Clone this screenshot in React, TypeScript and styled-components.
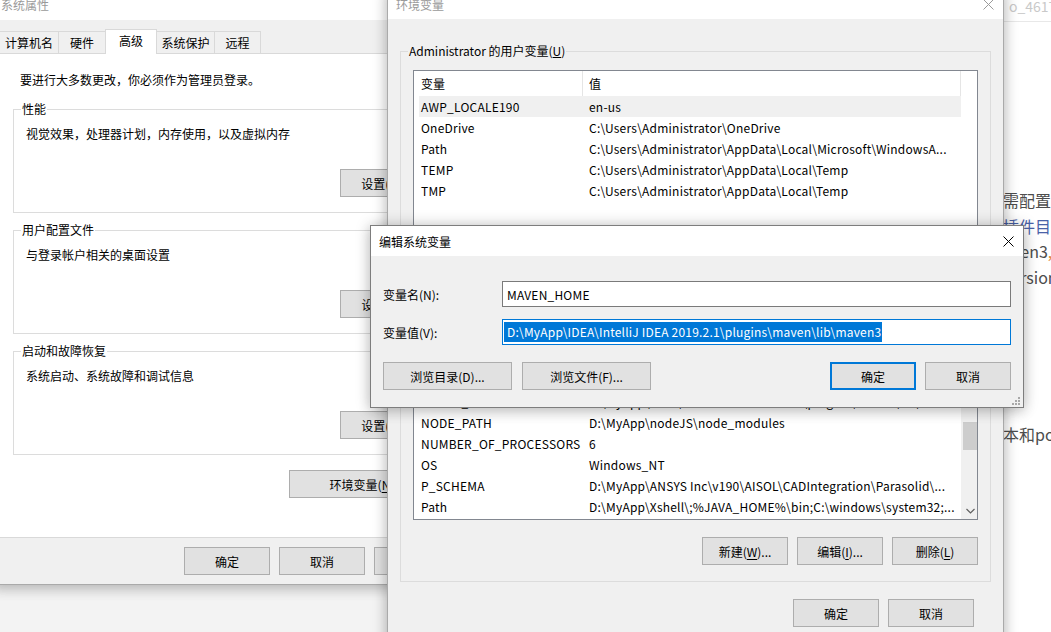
import React from "react";
import styled, { createGlobalStyle } from "styled-components";

const GlobalStyle = createGlobalStyle`
  html, body {
    margin: 0;
    padding: 0;
  }
  body {
    font-family: "Noto Sans CJK SC", "Noto Sans", sans-serif;
    font-size: 12px;
    color: #000;
  }
`;

const Desktop = styled.div`
  position: relative;
  width: 1051px;
  height: 632px;
  overflow: hidden;
  background: #f3f3f3;
`;

/* browser page that sits behind the dialogs */
const Page = styled.div`
  position: absolute;
  left: 990px;
  top: 0;
  right: 0;
  bottom: 0;
  background: #fff;
  display: flex;
  flex-direction: column;
`;

const PageStrip = styled.div`
  height: 21px;
  border-bottom: 1px solid #e8e8e8;
  padding-left: 19px;
  color: #c9c9c9;
  font-size: 14px;
  line-height: 12px;
  white-space: nowrap;
  overflow: hidden;
`;

const Article = styled.div`
  padding: 166px 0 0 13px;
  font-size: 16px;
  line-height: 25.5px;
  color: #4d4d4d;
  white-space: nowrap;
`;

const Para = styled.p`
  margin: 0 0 132px;
`;

const Link = styled.span`
  color: #4a62a8;
`;

const Mark = styled.span`
  color: #e3883c;
`;

const Win = styled.div<{ $x: number; $y: number; $w: number; $h: number; $active?: boolean }>`
  position: absolute;
  left: ${(p) => p.$x}px;
  top: ${(p) => p.$y}px;
  width: ${(p) => p.$w}px;
  height: ${(p) => p.$h}px;
  box-sizing: border-box;
  display: flex;
  flex-direction: column;
  background: #f0f0f0;
  border: 1px solid ${(p) => (p.$active ? "#7d7d7d" : "#aaaaaa")};
  box-shadow: 0 0 14px rgba(0, 0, 0, 0.22), 0 5px 12px rgba(0, 0, 0, 0.12);
`;

const TitleBar = styled.div<{ $h: number; $active?: boolean }>`
  flex: none;
  height: ${(p) => p.$h}px;
  display: flex;
  align-items: center;
  justify-content: space-between;
  padding-left: 8px;
  background: #fff;
  color: ${(p) => (p.$active ? "#000" : "#9a9a9a")};
  white-space: nowrap;
`;

const CloseBox = styled.div`
  width: 30px;
  height: 100%;
  display: flex;
  align-items: center;
  justify-content: center;
`;

const Close = ({ active }: { active?: boolean }) => (
  <CloseBox>
    <svg width="11" height="11" viewBox="0 0 11 11">
      <path d="M0.5 0.5L10.5 10.5M10.5 0.5L0.5 10.5" stroke={active ? "#000" : "#9a9a9a"} strokeWidth="1" />
    </svg>
  </CloseBox>
);

const TabStrip = styled.div`
  flex: none;
  height: 33px;
  display: flex;
  align-items: flex-end;
  padding-left: 7px;
`;

const Tab = styled.div<{ $w: number; $selected?: boolean }>`
  box-sizing: border-box;
  width: ${(p) => p.$w}px;
  height: ${(p) => (p.$selected ? 25 : 22)}px;
  margin: 0 0 ${(p) => (p.$selected ? -1 : 0)}px -1px;
  padding-bottom: ${(p) => (p.$selected ? 3 : 0)}px;
  display: flex;
  align-items: center;
  justify-content: center;
  border: 1px solid #d9d9d9;
  border-bottom: none;
  background: ${(p) => (p.$selected ? "#fff" : "#f0f0f0")};
  position: relative;
  z-index: ${(p) => (p.$selected ? 2 : 1)};
`;

const TabPanel = styled.div`
  flex: none;
  height: 485px;
  box-sizing: border-box;
  margin: 0 6px;
  padding: 18px 13px 0;
  background: #fff;
  border: 1px solid #d9d9d9;
  display: flex;
  flex-direction: column;
`;

const Note = styled.div`
  padding-left: 7px;
  line-height: 16px;
`;

const Group = styled.fieldset`
  margin: 9px 0 0;
  padding: 0 12px 15px;
  min-width: 0;
  border: 1px solid #dcdcdc;
  display: flex;
  flex-direction: column;
  ${Note} + & {
    margin-top: 13px;
  }
`;

const EnvGroup = styled(Group)`
  padding-bottom: 16px;
  margin-top: 9px;
  &:first-child {
    margin-top: 0;
  }
`;

const Legend = styled.legend`
  margin-left: -5px;
  padding: 0 1px;
  line-height: 16px;
`;

const GroupText = styled.div`
  margin-top: 9px;
  line-height: 16px;
`;

const Actions = styled.div<{ $gap?: number; $top: number }>`
  display: flex;
  justify-content: flex-end;
  gap: ${(p) => p.$gap ?? 0}px;
  margin-top: ${(p) => p.$top}px;
`;

const Button = styled.div<{ $w?: number; $default?: boolean }>`
  box-sizing: border-box;
  width: ${(p) => p.$w ?? 86}px;
  height: 28px;
  flex: none;
  display: flex;
  align-items: center;
  justify-content: center;
  background: #e1e1e1;
  border: ${(p) => (p.$default ? "2px solid #0078d7" : "1px solid #adadad")};
  white-space: nowrap;
  u {
    text-underline-offset: 2px;
  }
`;

const Footer = styled.div`
  flex: 1;
  display: flex;
  justify-content: flex-end;
  align-items: flex-start;
  gap: 9px;
  padding: 9px 5px 0 0;
`;

const EnvBody = styled.div`
  flex: 1;
  display: flex;
  flex-direction: column;
  padding: 24px 12px 0;
`;

const EnvFooter = styled(Actions)`
  padding-right: 17px;
`;

const ListBox = styled.div`
  box-sizing: border-box;
  height: 176px;
  margin-top: 11px;
  border: 1px solid #828790;
  background: #fff;
  display: flex;
  overflow: hidden;
`;

const ListBody = styled.div`
  width: 547px;
  flex: none;
  display: flex;
  flex-direction: column;
`;

const HeaderRow = styled.div`
  flex: none;
  height: 25px;
  display: flex;
`;

const HeaderCell = styled.div<{ $w: number }>`
  box-sizing: border-box;
  width: ${(p) => p.$w}px;
  padding-left: 6px;
  display: flex;
  align-items: center;
  border-right: 1px solid #e5e5e5;
  &:first-child {
    padding-left: 7px;
  }
`;

const Row = styled.div<{ $selected?: boolean }>`
  flex: none;
  height: 21px;
  margin-left: 5px;
  display: flex;
  align-items: center;
  background: ${(p) => (p.$selected ? "#f0f0f0" : "transparent")};
  white-space: nowrap;
  letter-spacing: 0.22px;
`;

const NameCell = styled.div`
  width: 164px;
  padding-left: 2px;
  box-sizing: border-box;
  overflow: hidden;
`;

const ValueCell = styled.div`
  width: 378px;
  padding-left: 6px;
  box-sizing: border-box;
  overflow: hidden;
`;

const Scrollbar = styled.div`
  width: 18px;
  flex: none;
  display: flex;
  flex-direction: column;
  background: #f0f0f0;
`;

const ScrollArrow = styled.div`
  height: 17px;
  flex: none;
  display: flex;
  align-items: center;
  justify-content: center;
`;

const ScrollTrack = styled.div`
  flex: 1;
  display: flex;
  flex-direction: column;
  align-items: center;
`;

const Thumb = styled.div`
  width: 15px;
  height: 28px;
  background: #cdcdcd;
`;

const Chevron = ({ up }: { up?: boolean }) => (
  <svg width="9" height="6" viewBox="0 0 9 6">
    <path d={up ? "M0.5 5L4.5 1L8.5 5" : "M0.5 1L4.5 5L8.5 1"} stroke="#606060" strokeWidth="1.2" fill="none" />
  </svg>
);

const DialogBody = styled.div`
  flex: 1;
  display: flex;
  flex-direction: column;
  padding: 25px 12px 0;
`;

const FieldGrid = styled.div`
  display: grid;
  grid-template-columns: 119px 1fr;
  row-gap: 12px;
  align-items: center;
`;

const TextField = styled.div<{ $focused?: boolean }>`
  box-sizing: border-box;
  height: 26px;
  display: flex;
  align-items: center;
  padding-left: ${(p) => (p.$focused ? 1 : 4)}px;
  background: #fff;
  border: 1px solid ${(p) => (p.$focused ? "#0078d7" : "#7a7a7a")};
  white-space: nowrap;
  overflow: hidden;
  letter-spacing: 0.2px;
`;

const Selection = styled.span`
  background: #0078d7;
  color: #fff;
  line-height: 20px;
  padding: 0 1px 0 3px;
`;

const DialogButtons = styled.div`
  display: flex;
  gap: 10px;
  margin-top: 17px;
`;

const RightButtons = styled.div`
  display: flex;
  gap: 9px;
  margin-left: auto;
`;

const Grip = styled.svg`
  position: absolute;
  right: 3px;
  bottom: 2px;
`;

const tabs: [string, number][] = [
  ["计算机名", 60],
  ["硬件", 48],
  ["高级", 52],
  ["系统保护", 59],
  ["远程", 47],
];

const userVars = [
  ["AWP_LOCALE190", "en-us"],
  ["OneDrive", "C:\\Users\\Administrator\\OneDrive"],
  ["Path", "C:\\Users\\Administrator\\AppData\\Local\\Microsoft\\WindowsA..."],
  ["TEMP", "C:\\Users\\Administrator\\AppData\\Local\\Temp"],
  ["TMP", "C:\\Users\\Administrator\\AppData\\Local\\Temp"],
];

const systemVars = [
  ["JAVA_HOME", "D:\\MyApp\\Java\\jdk1.8.0_201"],
  ["MAVEN_HOME", "D:\\MyApp\\IDEA\\IntelliJ IDEA 2019.2.1\\plugins\\maven\\lib\\maven3"],
  ["NODE_PATH", "D:\\MyApp\\nodeJS\\node_modules"],
  ["NUMBER_OF_PROCESSORS", "6"],
  ["OS", "Windows_NT"],
  ["P_SCHEMA", "D:\\MyApp\\ANSYS Inc\\v190\\AISOL\\CADIntegration\\Parasolid\\..."],
  ["Path", "D:\\MyApp\\Xshell\\;%JAVA_HOME%\\bin;C:\\windows\\system32;..."],
];

const groups = [
  { title: "性能", text: "视觉效果，处理器计划，内存使用，以及虚拟内存", key: "S" },
  { title: "用户配置文件", text: "与登录帐户相关的桌面设置", key: "E" },
  { title: "启动和故障恢复", text: "系统启动、系统故障和调试信息", key: "T" },
];

const VarList = ({ rows, selected, scroll }: { rows: string[][]; selected?: number; scroll?: boolean }) => (
  <ListBox>
    <ListBody>
      <HeaderRow>
        <HeaderCell $w={169}>变量</HeaderCell>
        <HeaderCell $w={378}>值</HeaderCell>
      </HeaderRow>
      {rows.map(([name, value], i) => (
        <Row key={name + i} $selected={i === selected}>
          <NameCell>{name}</NameCell>
          <ValueCell>{value}</ValueCell>
        </Row>
      ))}
    </ListBody>
    {scroll && (
      <Scrollbar>
        <ScrollArrow>
          <Chevron up />
        </ScrollArrow>
        <ScrollTrack>
          <Thumb style={{ marginTop: 60 }} />
        </ScrollTrack>
        <ScrollArrow>
          <Chevron />
        </ScrollArrow>
      </Scrollbar>
    )}
  </ListBox>
);

const VarButtons = () => (
  <Actions $top={17} $gap={9}>
    <Button>
      新建(<u>W</u>)...
    </Button>
    <Button>
      编辑(<u>I</u>)...
    </Button>
    <Button>
      删除(<u>L</u>)
    </Button>
  </Actions>
);

export default function App() {
  return (
    <>
      <GlobalStyle />
      <Desktop>
        <Page>
          <PageStrip>o_4617259</PageStrip>
          <Article>
            <Para>
              需配置
              <br />
              <Link>插件目</Link>录
              <br />
              aven3<Mark>,</Mark>
              <br />
              version
            </Para>
            <Para>本和pom</Para>
          </Article>
        </Page>

        <Win $x={-8} $y={-12} $w={474} $h={597}>
          <TitleBar $h={31}>系统属性</TitleBar>
          <TabStrip>
            {tabs.map(([t, w]) => (
              <Tab key={t} $w={w} $selected={t === "高级"}>
                {t}
              </Tab>
            ))}
          </TabStrip>
          <TabPanel>
            <Note>要进行大多数更改，你必须作为管理员登录。</Note>
            {groups.map((g) => (
              <Group key={g.title}>
                <Legend>{g.title}</Legend>
                <GroupText>{g.text}</GroupText>
                <Actions $top={27}>
                  <Button $w={92}>
                    设置(<u>{g.key}</u>)...
                  </Button>
                </Actions>
              </Group>
            ))}
            <Actions $top={15}>
              <Button $w={156}>
                环境变量(<u>N</u>)...
              </Button>
            </Actions>
          </TabPanel>
          <Footer>
            <Button>确定</Button>
            <Button>取消</Button>
            <Button>
              应用(<u>A</u>)
            </Button>
          </Footer>
        </Win>

        <Win $x={387} $y={-12} $w={617} $h={660}>
          <TitleBar $h={30}>
            环境变量
            <Close />
          </TitleBar>
          <EnvBody>
            <EnvGroup>
              <Legend>
                Administrator 的用户变量(<u>U</u>)
              </Legend>
              <VarList rows={userVars} selected={0} />
              <VarButtons />
            </EnvGroup>
            <EnvGroup>
              <Legend>
                系统变量(<u>S</u>)
              </Legend>
              <VarList rows={systemVars} scroll />
              <VarButtons />
            </EnvGroup>
            <EnvFooter $top={17} $gap={9}>
              <Button>确定</Button>
              <Button>取消</Button>
            </EnvFooter>
          </EnvBody>
        </Win>

        <Win $x={370} $y={225} $w={654} $h={183} $active>
          <TitleBar $h={30} $active>
            编辑系统变量
            <Close active />
          </TitleBar>
          <DialogBody>
            <FieldGrid>
              <span>变量名(N):</span>
              <TextField>MAVEN_HOME</TextField>
              <span>变量值(V):</span>
              <TextField $focused>
                <Selection>D:\MyApp\IDEA\IntelliJ IDEA 2019.2.1\plugins\maven\lib\maven3</Selection>
              </TextField>
            </FieldGrid>
            <DialogButtons>
              <Button $w={129}>浏览目录(D)...</Button>
              <Button $w={129}>浏览文件(F)...</Button>
              <RightButtons>
                <Button $default>确定</Button>
                <Button>取消</Button>
              </RightButtons>
            </DialogButtons>
          </DialogBody>
          <Grip width="8" height="8" viewBox="0 0 8 8">
            <g fill="#a8a8a8">
              <rect x="6" y="0" width="2" height="2" />
              <rect x="3" y="3" width="2" height="2" />
              <rect x="6" y="3" width="2" height="2" />
              <rect x="0" y="6" width="2" height="2" />
              <rect x="3" y="6" width="2" height="2" />
              <rect x="6" y="6" width="2" height="2" />
            </g>
          </Grip>
        </Win>
      </Desktop>
    </>
  );
}
